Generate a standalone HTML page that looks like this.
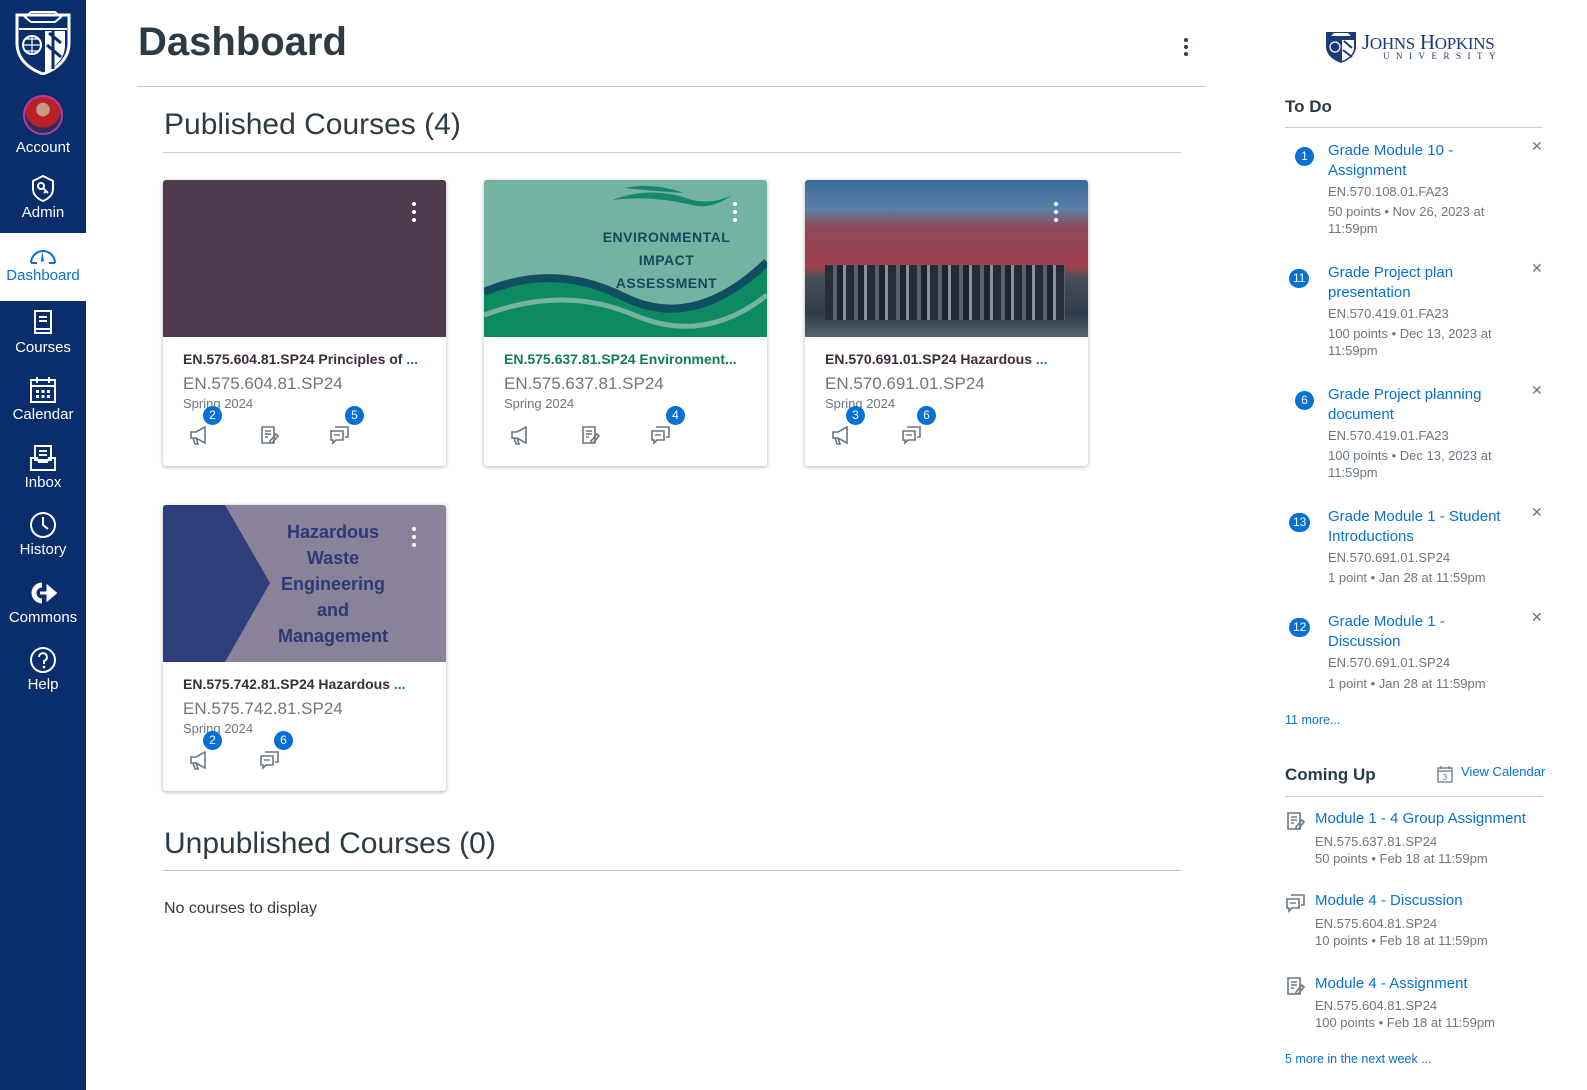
<!DOCTYPE html>
<html><head><meta charset="utf-8"><style>
*{box-sizing:border-box;margin:0;padding:0}
html,body{width:1587px;height:1090px;overflow:hidden}
body{background:#fff;font-family:"Liberation Sans",sans-serif;color:#2d3b45}
#wrap{position:relative;width:1587px;height:1090px;overflow:hidden}
.abs{position:absolute}
#nav{left:0;top:0;width:86px;height:1090px;background:#0a2d6b}
.ni{position:absolute;left:0;width:86px;text-align:center;color:#fff;font-size:15px}
.ni svg{display:block;margin:0 auto 2px}
.card{position:absolute;width:283px;height:286px;background:#fff;box-shadow:0 1px 4px rgba(0,0,0,.3);border-radius:3px;overflow:hidden}
.card .img{height:157px;position:relative;overflow:hidden}
.ct{position:absolute;left:20px;top:171px;font-size:14px;font-weight:bold;color:#3d2e3d;white-space:nowrap}
.cc{position:absolute;left:20px;top:194px;font-size:17px;color:#6b7780}
.cs{position:absolute;left:20px;top:216px;font-size:13px;color:#6b7780}
.ic{position:absolute;top:245px}
.badge{position:absolute;width:19px;height:19px;border-radius:50%;background:#0770d4;color:#fff;font-size:12px;text-align:center;line-height:19px}
.kb{position:absolute;right:30px;top:22px;width:4px}
.kb i{display:block;width:4px;height:4px;border-radius:50%;background:#fff;margin-bottom:4px}
h2{position:absolute;font-weight:normal;font-size:30px;color:#2d3b45;white-space:nowrap}
.hr{position:absolute;height:1px;background:#c7cdd1}
.td{position:absolute;left:1285px;width:258px}
.td .b{position:absolute;left:10px;top:6px;height:19px;min-width:19px;padding:0 4px;border-radius:10px;background:#0770d4;color:#fff;font-size:12px;text-align:center;line-height:19px}
.td .t{position:absolute;left:43px;top:0;font-size:15px;color:#0770d4;line-height:20px;width:190px}
.td .s{position:absolute;left:43px;font-size:13px;color:#6b7780;line-height:17px;width:190px}
.td .x{position:absolute;left:246px;top:-3px;color:#6b7780;font-size:14px}
.cu{position:absolute;left:1285px;width:258px}
.cu .t{position:absolute;left:30px;top:0;font-size:15px;color:#0770d4;white-space:nowrap}
.cu .s{position:absolute;left:30px;font-size:13px;color:#6b7780;line-height:17px;white-space:nowrap}
</style></head><body><div id="wrap">
<div id="nav" class="abs">
 <svg class="abs" style="left:13px;top:9px" width="60" height="66" viewBox="0 0 60 66"><path d="M4 6h52v28c0 16-12 26-26 31C16 60 4 50 4 34z" fill="none" stroke="#fff" stroke-width="3"/><path d="M12 8l6-5h24l6 5-6 5H18z" fill="none" stroke="#fff" stroke-width="2"/><path d="M6 20h48" stroke="#fff" stroke-width="2"/><circle cx="19" cy="36" r="9" fill="none" stroke="#fff" stroke-width="2"/><path d="M10 36h18M19 27v18M13 30h12M13 42h12" stroke="#fff" stroke-width="1.2"/><path d="M32 22h20v14c0 14-10 22-20 27z" fill="#fff"/><path d="M36 24l12 10M34 36l14 12M40 22v38" stroke="#0a2d6b" stroke-width="3"/></svg>
 <div class="ni" style="top:95px"><div style="width:40px;height:40px;border-radius:50%;margin:0 auto 4px;background:radial-gradient(circle at 50% 35%,#c89a80 0 22%,#b9202a 24% 60%,#2a2f55 62%);border:2px solid #b43c9d"></div>Account</div>
 <div class="ni" style="top:174px"><svg width="26" height="28" viewBox="0 0 26 28"><path d="M13 2l10 5v8c0 6-5 10-10 12C8 25 3 21 3 15V7z" fill="none" stroke="#fff" stroke-width="2"/><circle cx="11" cy="12" r="3" fill="none" stroke="#fff" stroke-width="2"/><path d="M13 14l5 5M16 17l-2 2" stroke="#fff" stroke-width="2"/></svg>Admin</div>
 <div class="abs" style="left:0;top:233px;width:86px;height:68px;background:#fff"></div>
 <div class="ni" style="top:243px;color:#0770d4"><svg width="30" height="22" viewBox="0 0 30 22"><path d="M3 20A12 12 0 1 1 27 20" fill="none" stroke="#0770d4" stroke-width="2"/><path d="M3 20h6M21 20h6" stroke="#0770d4" stroke-width="2"/><path d="M14 8l2 10-3 1z" fill="#0770d4"/></svg>Dashboard</div>
 <div class="ni" style="top:309px"><svg width="24" height="28" viewBox="0 0 24 28"><rect x="4" y="2" width="16" height="22" fill="none" stroke="#fff" stroke-width="2"/><path d="M8 8h8M8 12h8M4 20h16" stroke="#fff" stroke-width="2"/></svg>Courses</div>
 <div class="ni" style="top:376px"><svg width="28" height="28" viewBox="0 0 28 28"><rect x="2" y="4" width="24" height="22" fill="none" stroke="#fff" stroke-width="2"/><path d="M2 10h24M8 1v6M20 1v6" stroke="#fff" stroke-width="2"/><path d="M7 14h3v3H7zM12.5 14h3v3h-3zM18 14h3v3h-3zM7 19h3v3H7zM12.5 19h3v3h-3zM18 19h3v3h-3z" fill="#fff"/></svg>Calendar</div>
 <div class="ni" style="top:444px"><svg width="28" height="28" viewBox="0 0 28 28"><path d="M6 2h16v14H6zM2 14h6l2 4h8l2-4h6v12H2z" fill="none" stroke="#fff" stroke-width="2"/><path d="M10 7h8M10 11h8" stroke="#fff" stroke-width="2"/></svg>Inbox</div>
 <div class="ni" style="top:511px"><svg width="28" height="28" viewBox="0 0 28 28"><circle cx="14" cy="14" r="12" fill="none" stroke="#fff" stroke-width="2"/><path d="M14 6v8l5 4" fill="none" stroke="#fff" stroke-width="2"/></svg>History</div>
 <div class="ni" style="top:579px"><svg width="30" height="28" viewBox="0 0 30 28"><path d="M14 6A8 8 0 1 0 14 22" fill="none" stroke="#fff" stroke-width="5"/><path d="M12 14h12M20 8l7 6-7 6z" fill="#fff" stroke="#fff" stroke-width="3"/></svg>Commons</div>
 <div class="ni" style="top:646px"><svg width="28" height="28" viewBox="0 0 28 28"><circle cx="14" cy="14" r="12" fill="none" stroke="#fff" stroke-width="2"/><path d="M10 11a4 4 0 1 1 5 4v3" fill="none" stroke="#fff" stroke-width="2"/><circle cx="15" cy="21" r="1.3" fill="#fff"/></svg>Help</div>
</div>

<div class="abs" style="left:138px;top:20px;font-size:40px;font-weight:bold;color:#2d3b45">Dashboard</div>
<div class="abs" style="left:1184px;top:38px;width:4px"><i style="display:block;width:4px;height:4px;border-radius:50%;background:#2d3b45;margin-bottom:3px"></i><i style="display:block;width:4px;height:4px;border-radius:50%;background:#2d3b45;margin-bottom:3px"></i><i style="display:block;width:4px;height:4px;border-radius:50%;background:#2d3b45"></i></div>
<div class="hr" style="left:137px;top:86px;width:1069px"></div>

<h2 style="left:164px;top:108px">Published Courses (4)</h2>
<div class="hr" style="left:163px;top:152px;width:1018px"></div>

<svg width="0" height="0" style="position:absolute;left:0;top:0"><defs>
<g id="meg"><path d="M3 7h5l9-5v16l-9-5H3zM5 13l2 6h3l-2-6" fill="none" stroke="#6b7780" stroke-width="1.6"/></g>
<g id="asg"><path d="M3 2h12v16H3zM6 6h6M6 9h6M6 12h3M11 16l6-7 2 2-6 7h-2z" fill="none" stroke="#6b7780" stroke-width="1.6"/></g>
<g id="dis"><path d="M6 2h13v10h-3M2 6h12v9H7l-3 3v-3H2z" fill="none" stroke="#6b7780" stroke-width="1.6"/><path d="M5 10h6" stroke="#6b7780" stroke-width="1.4"/></g>
</defs></svg>

<div class="card" style="left:163px;top:180px">
 <div class="img" style="background:#4d3a4c"><div class="kb"><i></i><i></i><i></i></div></div>
 <div class="ct">EN.575.604.81.SP24 Principles of <span style="color:#0770d4">...</span></div>
 <div class="cc">EN.575.604.81.SP24</div><div class="cs">Spring 2024</div>
 <svg class="ic" style="left:25px" width="22" height="22"><use href="#meg"/></svg><div class="badge" style="left:40px;top:226px">2</div>
 <svg class="ic" style="left:96px" width="22" height="22"><use href="#asg"/></svg>
 <svg class="ic" style="left:166px" width="22" height="22"><use href="#dis"/></svg><div class="badge" style="left:182px;top:226px">5</div>
</div>
<div class="card" style="left:484px;top:180px">
 <div class="img" style="background:#74b3a3">
  <svg class="abs" style="left:0;top:0" width="283" height="157"><path d="M128 20q40-15 80 0 20 5 40-5-20 15-40 10-40-10-80-5z" fill="#16876a"/><path d="M140 8q30-6 60 5-30-2-60-5z" fill="#16876a"/><path d="M0 110q70-30 140 5t143-30v72H0z" fill="#0e8a63"/><path d="M0 112q70-30 140 5t143-35" fill="none" stroke="#0f4f5f" stroke-width="8"/><path d="M0 135q80-30 150 0t133-20" fill="none" stroke="#74b3a3" stroke-width="5"/></svg>
  <div class="abs" style="left:110px;top:46px;width:145px;text-align:center;font-size:14px;font-weight:bold;color:#15485e;line-height:23px;letter-spacing:0.5px">ENVIRONMENTAL<br>IMPACT<br>ASSESSMENT</div>
  <div class="kb"><i></i><i></i><i></i></div></div>
 <div class="ct" style="color:#0e7d55">EN.575.637.81.SP24 Environment...</div>
 <div class="cc">EN.575.637.81.SP24</div><div class="cs">Spring 2024</div>
 <svg class="ic" style="left:25px" width="22" height="22"><use href="#meg"/></svg>
 <svg class="ic" style="left:96px" width="22" height="22"><use href="#asg"/></svg>
 <svg class="ic" style="left:166px" width="22" height="22"><use href="#dis"/></svg><div class="badge" style="left:182px;top:226px">4</div>
</div>
<div class="card" style="left:805px;top:180px">
 <div class="img" style="background:linear-gradient(180deg,#3c6a9c 0,#5a7fa8 18%,#8e4a5a 30%,#a0404e 55%,#4a4f5c 62%,#2f3a48 85%,#5a6470 100%)">
  <div class="abs" style="left:20px;top:85px;width:240px;height:55px;background:repeating-linear-gradient(90deg,#262c38 0 8px,#5b6070 8px 12px,#1f2530 12px 18px,#8a8f9c 18px 21px)"></div>
  <div class="kb"><i></i><i></i><i></i></div></div>
 <div class="ct">EN.570.691.01.SP24 Hazardous <span style="color:#0770d4">...</span></div>
 <div class="cc">EN.570.691.01.SP24</div><div class="cs">Spring 2024</div>
 <svg class="ic" style="left:25px" width="22" height="22"><use href="#meg"/></svg><div class="badge" style="left:41px;top:226px">3</div>
 <svg class="ic" style="left:96px" width="22" height="22"><use href="#dis"/></svg><div class="badge" style="left:112px;top:226px">6</div>
</div>
<div class="card" style="left:163px;top:505px">
 <div class="img" style="background:#8a8299">
  <svg class="abs" style="left:0;top:0" width="283" height="157"><path d="M0 0h62l45 78-45 79H0z" fill="#2f3f7c"/></svg>
  <div class="abs" style="left:95px;top:14px;width:150px;text-align:center;font-size:18px;font-weight:bold;color:#2b3a78;line-height:26px">Hazardous<br>Waste<br>Engineering<br>and<br>Management</div>
  <div class="kb"><i></i><i></i><i></i></div></div>
 <div class="ct">EN.575.742.81.SP24 Hazardous <span style="color:#0770d4">...</span></div>
 <div class="cc">EN.575.742.81.SP24</div><div class="cs">Spring 2024</div>
 <svg class="ic" style="left:25px" width="22" height="22"><use href="#meg"/></svg><div class="badge" style="left:40px;top:226px">2</div>
 <svg class="ic" style="left:96px" width="22" height="22"><use href="#dis"/></svg><div class="badge" style="left:111px;top:226px">6</div>
</div>

<h2 style="left:164px;top:827px">Unpublished Courses (0)</h2>
<div class="hr" style="left:163px;top:870px;width:1018px"></div>
<div class="abs" style="left:164px;top:900px;font-size:16px;color:#2d3b45">No courses to display</div>

<svg class="abs" style="left:1324px;top:28px" width="34" height="36" viewBox="0 0 34 36"><path d="M2 4h30v14c0 9-7 14-15 17C9 32 2 27 2 18z" fill="#1b3a78"/><path d="M10 5h14l3 3H7z" fill="#fff"/><circle cx="11" cy="19" r="5" fill="none" stroke="#fff" stroke-width="1.2"/><path d="M18 12h12v7c0 7-5 11-12 14z" fill="#fff"/><path d="M20 13l8 7M19 22l9 7" stroke="#1b3a78" stroke-width="2"/></svg>
<div class="abs" style="left:1362px;top:30px;font-family:'Liberation Serif',serif;font-size:21px;color:#1b3a78;letter-spacing:-0.3px;white-space:nowrap">J<span style="font-size:17px">OHNS</span> H<span style="font-size:17px">OPKINS</span></div>
<div class="abs" style="left:1383px;top:51px;font-family:'Liberation Serif',serif;font-size:9px;color:#1b3a78;letter-spacing:6.5px;white-space:nowrap">UNIVERSITY</div>

<div class="abs" style="left:1285px;top:97px;font-size:17px;font-weight:bold;color:#2d3b45">To Do</div>
<div class="hr" style="left:1285px;top:127px;width:258px"></div>

<div class="td" style="top:141px"><div class="b">1</div><div class="t">Grade Module 10 - Assignment</div><div class="s" style="top:42px">EN.570.108.01.FA23</div><div class="s" style="top:62px">50 points • Nov 26, 2023 at 11:59pm</div><div class="x">✕</div></div>
<div class="td" style="top:263px"><div class="b" style="left:4px">11</div><div class="t">Grade Project plan presentation</div><div class="s" style="top:42px">EN.570.419.01.FA23</div><div class="s" style="top:62px">100 points • Dec 13, 2023 at 11:59pm</div><div class="x">✕</div></div>
<div class="td" style="top:385px"><div class="b">6</div><div class="t">Grade Project planning document</div><div class="s" style="top:42px">EN.570.419.01.FA23</div><div class="s" style="top:62px">100 points • Dec 13, 2023 at 11:59pm</div><div class="x">✕</div></div>
<div class="td" style="top:507px"><div class="b" style="left:4px">13</div><div class="t">Grade Module 1 - Student Introductions</div><div class="s" style="top:42px">EN.570.691.01.SP24</div><div class="s" style="top:62px">1 point • Jan 28 at 11:59pm</div><div class="x">✕</div></div>
<div class="td" style="top:612px"><div class="b" style="left:4px">12</div><div class="t">Grade Module 1 - Discussion</div><div class="s" style="top:42px">EN.570.691.01.SP24</div><div class="s" style="top:63px">1 point • Jan 28 at 11:59pm</div><div class="x">✕</div></div>
<div class="abs" style="left:1285px;top:713px;font-size:12.5px;color:#0770d4">11 more...</div>

<div class="abs" style="left:1285px;top:765px;font-size:17px;font-weight:bold;color:#2d3b45">Coming Up</div>
<svg class="abs" style="left:1437px;top:765px" width="16" height="18" viewBox="0 0 16 18"><rect x="1" y="3" width="14" height="14" fill="none" stroke="#6b7780" stroke-width="1.3"/><path d="M1 6h14M4 1v3M12 1v3" stroke="#6b7780" stroke-width="1.3"/><text x="8" y="15" font-size="8" text-anchor="middle" fill="#6b7780" font-family="Liberation Sans">3</text></svg>
<div class="abs" style="left:1461px;top:764px;font-size:13px;color:#0770d4;white-space:nowrap">View Calendar</div>
<div class="hr" style="left:1285px;top:796px;width:258px"></div>

<div class="cu" style="top:810px"><svg class="abs" style="left:0;top:1px" width="20" height="20"><use href="#asg"/></svg><div class="t">Module 1 - 4 Group Assignment</div><div class="s" style="top:23px">EN.575.637.81.SP24</div><div class="s" style="top:40px">50 points • Feb 18 at 11:59pm</div></div>
<div class="cu" style="top:892px"><svg class="abs" style="left:0;top:1px" width="20" height="20"><use href="#dis"/></svg><div class="t">Module 4 - Discussion</div><div class="s" style="top:23px">EN.575.604.81.SP24</div><div class="s" style="top:40px">10 points • Feb 18 at 11:59pm</div></div>
<div class="cu" style="top:975px"><svg class="abs" style="left:0;top:1px" width="20" height="20"><use href="#asg"/></svg><div class="t">Module 4 - Assignment</div><div class="s" style="top:22px">EN.575.604.81.SP24</div><div class="s" style="top:39px">100 points • Feb 18 at 11:59pm</div></div>
<div class="abs" style="left:1285px;top:1052px;font-size:12.5px;color:#0770d4;white-space:nowrap">5 more in the next week ...</div>
</div></body></html>
